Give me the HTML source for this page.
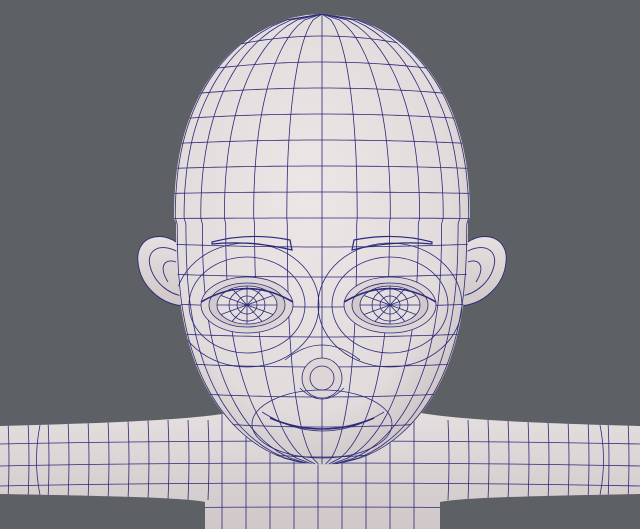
<!DOCTYPE html><html><head><style>html,body{margin:0;padding:0;background:#5d6165;overflow:hidden}svg{display:block}</style></head><body>
<svg id="s" width="640" height="529" viewBox="0 0 640 529" xmlns="http://www.w3.org/2000/svg">
<defs>
<radialGradient id="g" cx="0.45" cy="0.4" r="0.65"><stop offset="0" stop-color="#ece6e6"/><stop offset="0.75" stop-color="#e2dbdb"/><stop offset="1" stop-color="#c9c1c2"/></radialGradient>
<linearGradient id="a" x1="0" y1="0" x2="0" y2="1"><stop offset="0" stop-color="#e6e0e0"/><stop offset="1" stop-color="#cfc7c8"/></linearGradient>
<clipPath id="hc"><path id="hp0"/></clipPath>
<clipPath id="bc"><path id="bp0"/></clipPath>
</defs>
<g id="body"></g>
<g id="head"></g>
</svg>
<script>
const NS="http://www.w3.org/2000/svg",L="#2c2a7a";
function el(p,t,a){const e=document.createElementNS(NS,t);for(const k in a)e.setAttribute(k,a[k]);p.appendChild(e);return e}
function hw(y){if(y<220){let t=(220-y)/206;return 148*Math.pow(Math.max(0,1-Math.pow(t,2.3)),0.5)}let t=Math.min(1,(y-220)/245);return 146*Math.sqrt(Math.max(0,1-Math.pow(t,2.6)))}
let pts=[];for(let y=14;y<=465;y+=3)pts.push([322+hw(y),y]);for(let y=465;y>=14;y-=3)pts.push([322-hw(y),y]);
const hd="M"+pts.map(p=>p[0].toFixed(1)+","+p[1]).join("L")+"Z";
document.getElementById("hp0").setAttribute("d",hd);
const bd="M0,426 C150,422 230,418 260,405 L390,405 C420,418 500,422 640,426 L640,494 C520,496 460,498 440,502 L440,529 L205,529 L205,502 C185,498 120,496 0,494 Z";
document.getElementById("bp0").setAttribute("d",bd);
const B=document.getElementById("body");
el(B,"path",{d:bd,fill:"url(#a)"});
const bg=el(B,"g",{"clip-path":"url(#bc)",stroke:L,"stroke-width":"0.8",fill:"none"});
for(let x=8;x<640;x+=20){if(x>215&&x<430)continue;el(bg,"path",{d:`M${x},420 Q${x+2},460 ${x},500`})}
for(let x=222;x<430;x+=24)el(bg,"path",{d:`M${x},400 L${x},529`});
[444,466,486,510].forEach(y=>el(bg,"path",{d:`M0,${y} C200,${y-4} 440,${y-4} 640,${y}`}));
el(bg,"path",{d:"M600,425 Q607,460 600,495"});el(bg,"path",{d:"M40,425 Q33,460 40,495"});
const H=document.getElementById("head");
[[1],[-1]].forEach(([s])=>{const c=322,f=x=>c+s*(x-c);
el(H,"path",{d:`M${f(180)},245 C${f(160)},228 ${f(135)},238 ${f(138)},262 C${f(140)},285 ${f(160)},305 ${f(185)},306 Z`,fill:"url(#a)",stroke:L,"stroke-width":"0.9"});
el(H,"path",{d:`M${f(178)},252 C${f(160)},242 ${f(146)},250 ${f(150)},266 C${f(154)},282 ${f(168)},294 ${f(183)},296`,fill:"none",stroke:L,"stroke-width":"0.9"});
el(H,"path",{d:`M${f(176)},262 C${f(165)},258 ${f(158)},266 ${f(168)},282`,fill:"none",stroke:L,"stroke-width":"0.9"});});
el(H,"path",{d:hd,fill:"url(#g)"});
const g=el(H,"g",{"clip-path":"url(#hc)",stroke:L,"stroke-width":"0.8",fill:"none"});
for(let k=-6;k<=6;k++){let p=[];for(let y=14;y<=466;y+=6)p.push([322+hw(y)*Math.sin(k*0.24),y]);el(g,"path",{d:"M"+p.map(q=>q[0].toFixed(1)+","+q[1]).join("L")})}
for(let y0=36;y0<460;y0+=y0<230?26:30){let p=[];const w=hw(y0)+10;for(let x=-w;x<=w;x+=6){let t=x/Math.max(w,1);p.push([322+x,y0+(y0<230?-8:6)*(1-t*t)*(y0<230?(230-y0)/200:0.5)+(y0<230?8*(230-y0)/200:0)])}el(g,"path",{d:"M"+p.map(q=>q[0].toFixed(1)+","+q[1].toFixed(1)).join("L")})}
[[247,305],[390,305]].forEach(([cx,cy])=>{
el(g,"ellipse",{cx,cy,rx:72,ry:62});el(g,"ellipse",{cx,cy,rx:58,ry:48});
el(g,"ellipse",{cx,cy,rx:46,ry:28,fill:"#ddd5d6"});el(g,"ellipse",{cx,cy,rx:38,ry:22,fill:"#d2caca"});
el(g,"ellipse",{cx,cy,rx:30,ry:19,fill:"#e4dede"});el(g,"ellipse",{cx,cy,rx:18,ry:16});el(g,"ellipse",{cx,cy,rx:10,ry:9});
for(let i=0;i<12;i++){let a=i*Math.PI/6;el(g,"line",{x1:cx,y1:cy,x2:cx+30*Math.cos(a),y2:cy+19*Math.sin(a)})}
el(g,"path",{d:`M${cx-46},${cy-3} Q${cx},${cy-30} ${cx+46},${cy-3}`,"stroke-width":"1.6"});});
el(g,"path",{d:"M212,242 Q250,232 290,240 L292,250 Q250,240 212,244 Z","stroke-width":"1.2"});
el(g,"path",{d:"M432,242 Q394,232 354,240 L352,250 Q394,240 432,244 Z","stroke-width":"1.2"});
el(g,"circle",{cx:322,cy:378,r:20,fill:"#ddd5d6"});el(g,"circle",{cx:322,cy:378,r:12});
el(g,"path",{d:"M300,388 Q322,410 344,388"});el(g,"path",{d:"M285,360 Q322,330 360,360"});
el(g,"path",{d:"M270,418 Q322,440 374,418","stroke-width":"1.6"});el(g,"path",{d:"M262,412 Q322,450 384,412"});
el(g,"ellipse",{cx:322,cy:424,rx:70,ry:34});
</script>
</body></html>
